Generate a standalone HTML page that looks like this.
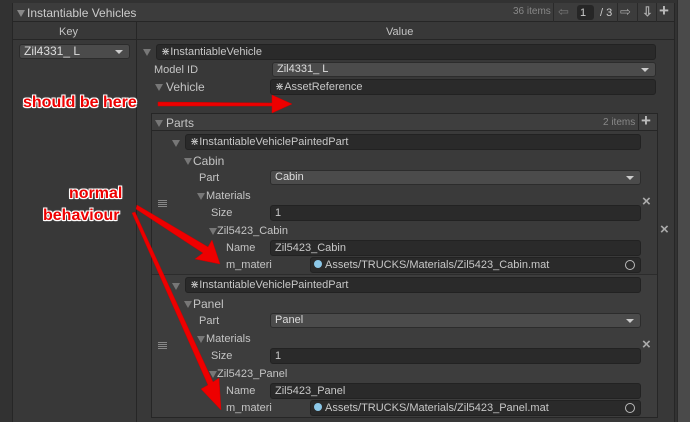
<!DOCTYPE html>
<html><head><meta charset="utf-8"><style>
*{margin:0;padding:0;box-sizing:border-box}
body{width:690px;height:422px;background:#323232;position:relative;overflow:hidden;font-family:"Liberation Sans",sans-serif;font-size:11px;color:#c4c4c4}
.a{position:absolute}
.t{position:absolute;white-space:nowrap;line-height:14px}
.f{position:absolute;background:#2a2a2a;border:1px solid #222;border-radius:3px;height:16px;padding:1px 4px;color:#c8c8c8;line-height:13px}
.d{position:absolute;background:#4b4b4b;border:1px solid #2c2c2c;border-radius:3px;height:15px;padding:0 4px;color:#ddd;line-height:13px}
.d:after{content:"";position:absolute;right:6px;top:5px;border:4px solid transparent;border-top:4px solid #ccc;border-bottom:0}
.tri{position:absolute;width:0;height:0;border-left:4px solid transparent;border-right:4px solid transparent;border-top:7px solid #777}
.x{position:absolute;color:#aaa;font-size:15px;font-weight:bold;line-height:14px}
.h{position:absolute;width:9px;height:1px;background:#888;box-shadow:0 2px 0 #888,0 4px 0 #888,0 6px 0 #888}
.r{position:absolute;font-weight:bold;font-size:16px;color:#e00;white-space:nowrap;text-shadow:-1px -1px 0 #fff,1px -1px 0 #fff,-1px 1px 0 #fff,1px 1px 0 #fff,0 1px 1px #fff,0 0 2px #fff}
</style></head><body>
<div class="a" style="left:12px;top:3px;width:663px;height:419px;background:#383838;border-left:1px solid #262626;border-right:1px solid #262626"></div>
<div class="a" style="left:677px;top:0;width:13px;height:422px;background:#4a4a4a;border-left:1px solid #2a2a2a"></div>
<div class="a" style="left:13px;top:3px;width:661px;height:19px;background:#3c3c3c;border-bottom:1px solid #262626"></div>
<div class="tri" style="left:17px;top:10px;border-top-color:#888"></div>
<div class="t" style="left:27px;top:6px;color:#ccc;font-size:12px">Instantiable Vehicles</div>
<div class="t" style="left:513px;top:5px;color:#888;font-size:10px">36 items</div>
<div class="a" style="left:553px;top:3px;width:1px;height:19px;background:#2a2a2a"></div>
<div class="t" style="left:558px;top:5px;color:#777;font-size:13px">⇦</div>
<div class="a" style="left:577px;top:5px;width:17px;height:15px;background:#262626;border-radius:3px"></div>
<div class="t" style="left:580px;top:6px;color:#ccc">1</div>
<div class="t" style="left:600px;top:6px;color:#ccc">/ 3</div>
<div class="a" style="left:617px;top:3px;width:1px;height:19px;background:#2a2a2a"></div>
<div class="t" style="left:620px;top:5px;color:#aaa;font-size:13px">⇨</div>
<div class="a" style="left:637px;top:3px;width:1px;height:19px;background:#2a2a2a"></div>
<div class="t" style="left:642px;top:5px;color:#aaa;font-size:13px;font-weight:bold">⇩</div>
<div class="a" style="left:656px;top:3px;width:1px;height:19px;background:#2a2a2a"></div>
<div class="t" style="left:659px;top:4px;color:#bbb;font-size:17px;font-weight:bold">+</div>
<div class="a" style="left:13px;top:39px;width:661px;height:1px;background:#262626"></div>
<div class="a" style="left:136px;top:22px;width:1px;height:400px;background:#262626"></div>
<div class="t" style="left:59px;top:25px">Key</div>
<div class="t" style="left:386px;top:25px">Value</div>
<div class="d" style="left:19px;top:44px;width:111px;font-size:12px">Zil4331_ L</div>
<div class="tri" style="left:143px;top:49px"></div>
<div class="f" style="left:156px;top:44px;width:500px">⋇InstantiableVehicle</div>
<div class="t" style="left:154px;top:63px">Model ID</div>
<div class="d" style="left:272px;top:62px;width:384px">Zil4331_ L</div>
<div class="tri" style="left:155px;top:84px"></div>
<div class="t" style="left:166px;top:80px;font-size:12px">Vehicle</div>
<div class="f" style="left:270px;top:79px;width:386px">⋇AssetReference</div>
<div class="a" style="left:151px;top:113px;width:507px;height:305px;border:1px solid #262626;background:#3a3a3a"></div>
<div class="a" style="left:152px;top:114px;width:505px;height:17px;background:#3e3e3e;border-bottom:1px solid #262626"></div>
<div class="tri" style="left:155px;top:120px"></div>
<div class="t" style="left:166px;top:116px;font-size:12px">Parts</div>
<div class="t" style="left:603px;top:116px;color:#888;font-size:10px">2 items</div>
<div class="a" style="left:638px;top:114px;width:1px;height:17px;background:#262626"></div>
<div class="t" style="left:641px;top:114px;color:#bbb;font-size:17px;font-weight:bold">+</div>
<div class="a" style="left:152px;top:274px;width:505px;height:143px;background:#3d3d3d;border-top:1px solid #2c2c2c"></div>
<div class="tri" style="left:172px;top:140px"></div>
<div class="f" style="left:185px;top:134px;width:456px">⋇InstantiableVehiclePaintedPart</div>
<div class="tri" style="left:184px;top:158px"></div>
<div class="t" style="left:193px;top:154px;font-size:12px">Cabin</div>
<div class="t" style="left:199px;top:171px">Part</div>
<div class="d" style="left:270px;top:170px;width:371px">Cabin</div>
<div class="tri" style="left:197px;top:193px"></div>
<div class="t" style="left:206px;top:189px">Materials</div>
<div class="t" style="left:211px;top:206px">Size</div>
<div class="f" style="left:270px;top:205px;width:371px">1</div>
<div class="tri" style="left:209px;top:228px"></div>
<div class="t" style="left:217px;top:224px">Zil5423_Cabin</div>
<div class="t" style="left:226px;top:241px">Name</div>
<div class="f" style="left:270px;top:240px;width:371px">Zil5423_Cabin</div>
<div class="t" style="left:226px;top:258px">m_materi</div>
<div class="f" style="left:310px;top:257px;width:331px;padding-left:14px">Assets/TRUCKS/Materials/Zil5423_Cabin.mat</div>
<div class="a" style="left:314px;top:260px;width:8px;height:8px;border-radius:50%;background:#8cc8e8"></div>
<div class="a" style="left:625px;top:260px;width:10px;height:10px;border-radius:50%;border:1.5px solid #bbb"></div>
<div class="h" style="left:158px;top:200px"></div>
<div class="x" style="left:642px;top:195px">×</div>
<div class="x" style="left:660px;top:223px">×</div>
<div class="tri" style="left:172px;top:283px"></div>
<div class="f" style="left:185px;top:277px;width:456px">⋇InstantiableVehiclePaintedPart</div>
<div class="tri" style="left:184px;top:301px"></div>
<div class="t" style="left:193px;top:297px;font-size:12px">Panel</div>
<div class="t" style="left:199px;top:314px">Part</div>
<div class="d" style="left:270px;top:313px;width:371px">Panel</div>
<div class="tri" style="left:197px;top:336px"></div>
<div class="t" style="left:206px;top:332px">Materials</div>
<div class="t" style="left:211px;top:349px">Size</div>
<div class="f" style="left:270px;top:348px;width:371px">1</div>
<div class="tri" style="left:209px;top:371px"></div>
<div class="t" style="left:217px;top:367px">Zil5423_Panel</div>
<div class="t" style="left:226px;top:384px">Name</div>
<div class="f" style="left:270px;top:383px;width:371px">Zil5423_Panel</div>
<div class="t" style="left:226px;top:401px">m_materi</div>
<div class="f" style="left:310px;top:400px;width:331px;padding-left:14px">Assets/TRUCKS/Materials/Zil5423_Panel.mat</div>
<div class="a" style="left:314px;top:403px;width:8px;height:8px;border-radius:50%;background:#8cc8e8"></div>
<div class="a" style="left:625px;top:403px;width:10px;height:10px;border-radius:50%;border:1.5px solid #bbb"></div>
<div class="h" style="left:158px;top:342px"></div>
<div class="x" style="left:642px;top:338px">×</div>
<div class="r" style="left:23px;top:94px">should be here</div>
<div class="r" style="left:69px;top:185px">normal</div>
<div class="r" style="left:43px;top:207px">behaviour</div>
<svg class="a" style="left:0;top:0" width="690" height="422">
<g fill="#e00" stroke="#c00" stroke-width="0.5">
<polygon points="158,102 272,103 272,95 292,104 272,113 272,106 158,106"/>
<polygon points="137,205 208,247 212,240 220,264 195,259 203,253 136,209"/>
<polygon points="135,212 213,382 219,378 221,410 201,389 208,385 132,213"/>
</g></svg>
</body></html>
